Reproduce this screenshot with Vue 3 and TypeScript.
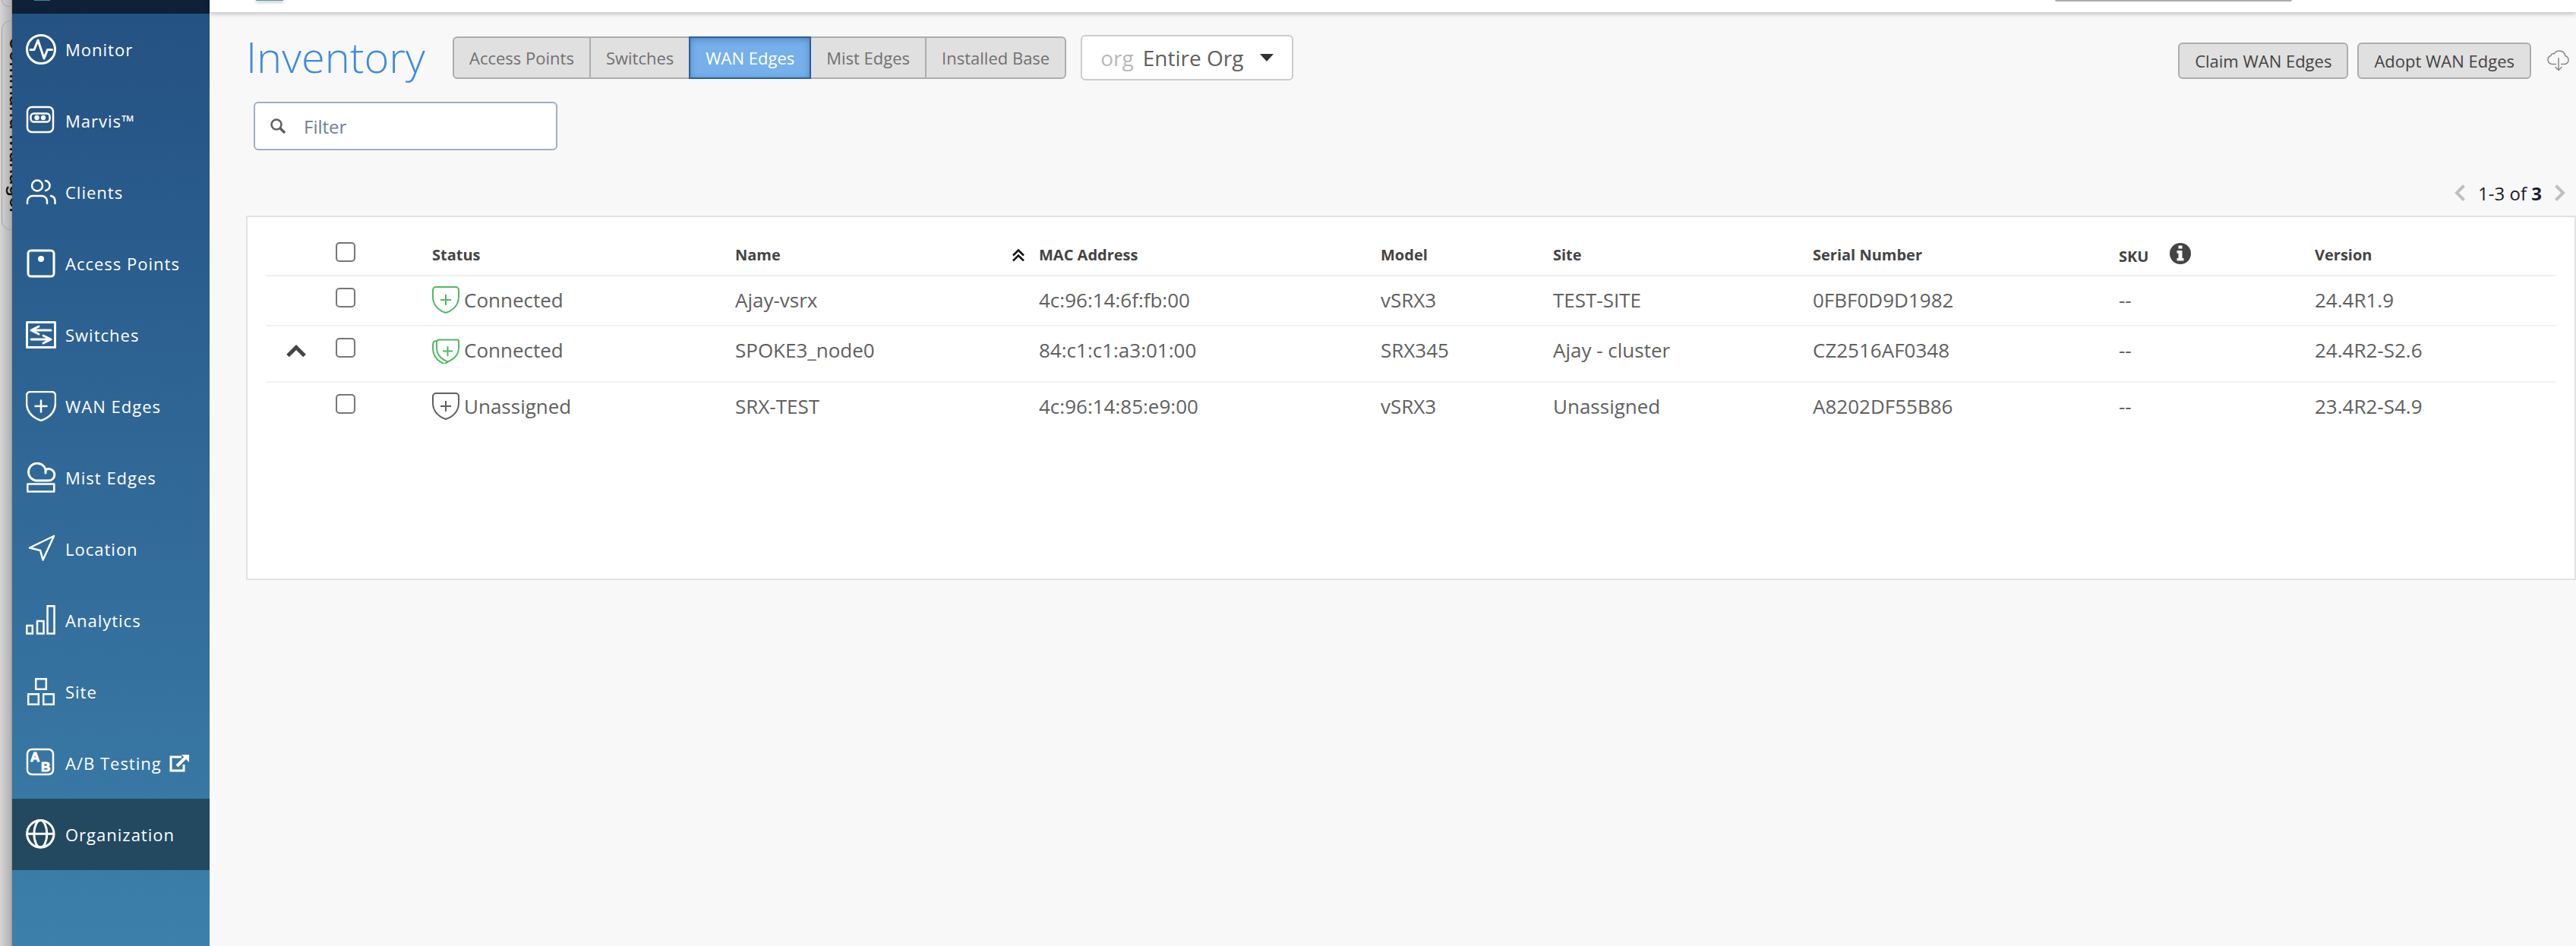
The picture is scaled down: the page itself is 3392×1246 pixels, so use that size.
<script setup lang="ts">
import { computed, ref } from 'vue'

interface NavItem {
  label: string
  icon: string
  external?: boolean
}

interface Device {
  status: 'Connected' | 'Unassigned'
  cluster: boolean
  name: string
  mac: string
  model: string
  site: string
  serial: string
  sku: string
  version: string
}

const navItems: NavItem[] = [
  {
    label: 'Monitor',
    icon: '<circle cx="20" cy="20" r="18.500" stroke-width="3"/><path stroke-width="3" d="M6 20.500h5L16 8l8 24 4.500-11.500h6"/>',
  },
  {
    label: 'Marvis™',
    icon: '<rect x="2" y="2" width="34" height="33" rx="6"/><rect x="6.500" y="10.500" width="25" height="11" rx="4"/><circle cx="14.500" cy="16" r="3.200" fill="#fff" stroke="none"/><circle cx="23" cy="16" r="3.200" fill="#fff" stroke="none"/>',
  },
  {
    label: 'Clients',
    icon: '<circle cx="15" cy="11.500" r="7"/><path d="M26 5c4 1 5.500 4 5.500 6.500S30 17 26 18M2 35v-3a7 7 0 0 1 7-7h12a7 7 0 0 1 7 7v3M33 25c4 1 5.500 4 5.500 7v3"/>',
  },
  {
    label: 'Access Points',
    icon: '<rect x="3" y="3" width="34" height="34" rx="4" stroke-width="3"/><circle cx="20" cy="14" r="4" fill="#fff" stroke="none"/>',
  },
  {
    label: 'Switches',
    icon: '<rect x="1.500" y="3.500" width="37" height="33" stroke-width="3"/><path stroke-width="3" d="M33 14H7M17 9L7 14l10 5M7 26h26M23 21l10 5-10 5"/>',
  },
  {
    label: 'WAN Edges',
    icon: '<path d="M6 1h28a5 5 0 0 1 5 5v9c0 12-8 20-19 24C9 35 1 27 1 15V6a5 5 0 0 1 5-5zM20 12.500v15M12.500 20h15"/>',
  },
  {
    label: 'Mist Edges',
    icon: '<path stroke-width="3" d="M26 14v-4.500A11.500 11.500 0 1 0 13 24h17a7.800 7.800 0 0 0 0-15.600c-2 0-4 1-4 3"/><rect x="2.300" y="28.500" width="35" height="10"/>',
  },
  {
    label: 'Location',
    icon: '<path d="M37 3L5 18.500l14 3.500 3.500 12.500z"/>',
  },
  {
    label: 'Analytics',
    icon: '<path stroke-linejoin="miter" d="M1.300 27h7.500v10.500H1.300zM15 21h8.500v16.500H15zM28.500 1.300h9v36.200h-9z"/>',
  },
  {
    label: 'Site',
    icon: '<path stroke-linejoin="miter" d="M13.200 3.200h13.600v13.600H13.200zM3.200 23.200h13.600v13.600H3.200zM23.200 23.200h13.600v13.600H23.200z"/>',
  },
  {
    label: 'A/B Testing',
    external: true,
    icon: '<rect x="2" y="2" width="34" height="33" rx="6"/><g fill="#fff" stroke="#fff" stroke-width="1" font-family="Liberation Sans, sans-serif" font-weight="700" font-size="17"><text x="6" y="18">A</text><text x="20" y="31">B</text></g>',
  },
  {
    label: 'Organization',
    icon: '<g stroke-width="3"><circle cx="19.300" cy="19.300" r="17.700"/><ellipse cx="19.300" cy="19.300" rx="8.500" ry="17.700"/><path d="M2 19.300h34"/></g>',
  },
]

const tabs = ['Access Points', 'Switches', 'WAN Edges', 'Mist Edges', 'Installed Base']

const devices: Device[] = [
  { status: 'Connected', cluster: false, name: 'Ajay-vsrx', mac: '4c:96:14:6f:fb:00', model: 'vSRX3', site: 'TEST-SITE', serial: '0FBF0D9D1982', sku: '--', version: '24.4R1.9' },
  { status: 'Connected', cluster: true, name: 'SPOKE3_node0', mac: '84:c1:c1:a3:01:00', model: 'SRX345', site: 'Ajay - cluster', serial: 'CZ2516AF0348', sku: '--', version: '24.4R2-S2.6' },
  { status: 'Unassigned', cluster: false, name: 'SRX-TEST', mac: '4c:96:14:85:e9:00', model: 'vSRX3', site: 'Unassigned', serial: 'A8202DF55B86', sku: '--', version: '23.4R2-S4.9' },
]

const activeNav = ref('Organization')
const activeTab = ref('WAN Edges')
const filter = ref('')
const selected = ref<string[]>([])

const visible = computed(() =>
  devices.filter((d) => Object.values(d).join(' ').toLowerCase().includes(filter.value.toLowerCase())),
)
const allSelected = computed({
  get: () => selected.value.length === devices.length,
  set: (on: boolean) => {
    selected.value = on ? devices.map((d) => d.serial) : []
  },
})
</script>

<template>
  <div class="app">
    <aside class="dock">
      <div class="dock-tab dock-tab-first"></div>
      <div class="dock-tab"><span>Command Manager</span></div>
    </aside>

    <nav class="sidebar">
      <div class="brand"><span class="brand-mark"></span></div>
      <a
        v-for="item in navItems"
        :key="item.label"
        href="#"
        class="nav-item"
        :class="{ active: item.label === activeNav }"
        @click.prevent="activeNav = item.label"
      >
        <svg class="nav-icon" viewBox="0 0 40 40" v-html="item.icon"></svg>
        <span>{{ item.label }}</span>
        <svg v-if="item.external" class="external" viewBox="0 0 26 24">
          <path d="M16 4H2v18h17v-8" fill="none" stroke="#fff" stroke-width="3" />
          <path d="M10 16L22 4" stroke="#fff" stroke-width="4" />
          <path d="M16 1h10v10z" fill="#fff" />
        </svg>
      </a>
    </nav>

    <main class="main">
      <div class="topbar">
        <span class="top-logo"></span>
        <span class="top-field"></span>
      </div>

      <section class="content">
        <header class="page-head">
          <h1>Inventory</h1>
          <div class="tabs">
            <button
              v-for="tab in tabs"
              :key="tab"
              type="button"
              :class="{ active: tab === activeTab }"
              @click="activeTab = tab"
            >{{ tab }}</button>
          </div>
          <div class="scope">
            <label for="scope">org</label>
            <select id="scope">
              <option>Entire Org</option>
            </select>
            <svg class="scope-arrow" viewBox="0 0 18 10"><path d="M0 0h18l-9 10z" fill="#333" /></svg>
          </div>
          <div class="actions">
            <button type="button" class="action">Claim WAN Edges</button>
            <button type="button" class="action">Adopt WAN Edges</button>
            <button type="button" class="download" aria-label="Download">
              <svg viewBox="0 0 30 28" fill="none" stroke="#888" stroke-width="1.500">
                <path d="M12 18.500H6.500A5.800 5.800 0 0 1 5 7.200C5.500 5 7.500 4 9.500 4.700 11 2 13.500 1 16 1c4.500 0 7.500 3 7.800 6.500a5.700 5.700 0 0 1 0 11H18" />
                <path d="M15 10v16M10.500 22l4.500 4.500 4.500-4.500" />
              </svg>
            </button>
          </div>
        </header>

        <label class="filter">
          <svg viewBox="0 0 20 20" fill="none" stroke="#606060">
            <circle cx="8" cy="8" r="6.500" stroke-width="2.500" />
            <path d="M12.500 12.500l6.500 6.500" stroke-width="3.500" />
          </svg>
          <input v-model="filter" type="text" placeholder="Filter" aria-label="Filter" />
        </label>

        <div class="pager">
          <button type="button" aria-label="Previous page">
            <svg viewBox="0 0 16 22"><path d="M13.500 1.500L4 11l9.500 9.500" fill="none" stroke="#bfbfbf" stroke-width="4" /></svg>
          </button>
          <span>1-3 of <b>3</b></span>
          <button type="button" aria-label="Next page">
            <svg viewBox="0 0 16 22"><path d="M2.500 1.500L12 11l-9.500 9.500" fill="none" stroke="#bfbfbf" stroke-width="4" /></svg>
          </button>
        </div>

        <div class="card">
          <table>
            <colgroup>
              <col class="c-expand" /><col class="c-check" /><col class="c-status" /><col class="c-name" />
              <col class="c-mac" /><col class="c-model" /><col class="c-site" /><col class="c-serial" />
              <col class="c-sku" /><col class="c-version" />
            </colgroup>
            <thead>
              <tr>
                <th></th>
                <th class="check"><input v-model="allSelected" type="checkbox" aria-label="Select all" /></th>
                <th>Status</th>
                <th>
                  <div class="sorted">
                    Name
                    <svg viewBox="0 0 16 16" fill="none" stroke="#111" stroke-width="2.500">
                      <path d="M1 8.500l7-7 7 7M1 15.500l7-7 7 7" />
                    </svg>
                  </div>
                </th>
                <th>MAC Address</th>
                <th>Model</th>
                <th>Site</th>
                <th>Serial Number</th>
                <th class="sku">
                  SKU
                  <svg viewBox="0 0 28 28">
                    <circle cx="14" cy="14" r="14" fill="#444" />
                    <path d="M11.500 3.500h5v4h-5zM9.500 10h7v10h2v3.500h-9V20h2v-6.500h-2z" fill="#fff" />
                  </svg>
                </th>
                <th>Version</th>
              </tr>
            </thead>
            <tbody>
              <tr v-for="d in visible" :key="d.serial" :class="{ cluster: d.cluster }">
                <td class="expand">
                  <button v-if="d.cluster" type="button" aria-label="Collapse cluster">
                    <svg viewBox="0 0 28 18"><path d="M3 15.500L14 4.500l11 11" fill="none" stroke="#444" stroke-width="5" /></svg>
                  </button>
                </td>
                <td class="check"><input v-model="selected" type="checkbox" :value="d.serial" :aria-label="'Select ' + d.name" /></td>
                <td>
                  <div class="status" :class="d.status.toLowerCase()">
                    <svg v-if="d.cluster" viewBox="0 0 36 36">
                      <path d="M9 4.500h24a2 2 0 0 1 2 2v8.500c0 9-6 15-14.500 18.500C12 30 6 24 6 15V7.500a3 3 0 0 1 3-3z" />
                      <path d="M6 6C3 6 1 7 1 11v4c0 11 5 17 14.500 21 2 0 3.500-1 5-2.500M20.500 13v13M14 19.500h13" />
                    </svg>
                    <svg v-else viewBox="0 0 36 36">
                      <path d="M5 1h26a4 4 0 0 1 4 4v9c0 10-7 18-17 21C8 32 1 24 1 14V5a4 4 0 0 1 4-4zM18 11v14M11 18h14" />
                    </svg>
                    <span>{{ d.status }}</span>
                  </div>
                </td>
                <td>{{ d.name }}</td>
                <td>{{ d.mac }}</td>
                <td>{{ d.model }}</td>
                <td>{{ d.site }}</td>
                <td>{{ d.serial }}</td>
                <td>{{ d.sku }}</td>
                <td>{{ d.version }}</td>
              </tr>
            </tbody>
          </table>
        </div>
      </section>
    </main>
  </div>
</template>

<style>
body {
  background: #f8f8f8;
}
</style>

<style scoped>
.app {
  display: flex;
  min-height: 100vh;
  font-family: 'Open Sans', 'Noto Sans', sans-serif;
  color: #606060;
}

.app * {
  box-sizing: border-box;
}

button {
  font: inherit;
  color: inherit;
  padding: 0;
  border: 0;
  background: none;
}

svg {
  display: block;
  flex: none;
}

/* Strip of the window behind, clipped by the sidebar */
.dock {
  width: 16px;
  flex: none;
  overflow: hidden;
  background: linear-gradient(90deg, #d6d6d6, #c6c6c6 40%, #b4b4b4 85%, #999);
}

.dock-tab {
  width: 60px;
  height: 276px;
  margin-left: 2px;
  padding: 20px 0 0 3px;
  border: 1px solid #a0a0a0;
  border-radius: 12px;
  color: #111;
  font: 500 25px/32px Inter, sans-serif;
}

.dock-tab span {
  display: block;
  writing-mode: vertical-rl;
  white-space: nowrap;
}

.dock-tab-first {
  height: 9px;
  margin-bottom: 18px;
  padding: 0;
  border-top: 0;
  border-radius: 0 0 12px 12px;
}

.sidebar {
  width: 260px;
  flex: none;
  background: linear-gradient(#245182, #295c8d 25%, #306897 50%, #3673a0 75%, #3c80ab);
}

.brand {
  height: 18px;
  padding-left: 29px;
  background: #0e2136;
}

.brand-mark {
  display: block;
  width: 21px;
  height: 1px;
  background: #2f8fa3;
}

.nav-item {
  display: flex;
  align-items: center;
  gap: 12px;
  height: 94px;
  padding-left: 18px;
  color: #fff;
  font-size: 22px;
  font-weight: 500;
  letter-spacing: 1px;
  text-decoration: none;
  white-space: nowrap;
}

.nav-item.active {
  background: #234961;
}

.nav-icon {
  width: 40px;
  height: 40px;
  fill: none;
  stroke: #fff;
  stroke-width: 2.500;
  stroke-linecap: round;
  stroke-linejoin: round;
}

.external {
  width: 26px;
  height: 24px;
  margin-left: -2px;
}

.main {
  flex: 1;
  min-width: 0;
}

.topbar {
  display: flex;
  justify-content: space-between;
  height: 16px;
  padding: 0 374px 0 61px;
  background: #fff;
  box-shadow: 0 2px 6px rgba(0, 0, 0, 0.25);
}

.top-logo {
  width: 36px;
  height: 1px;
  background: #5f9aa5;
  box-shadow: 0 1px 4px rgba(0, 0, 0, 0.8);
}

.top-field {
  width: 312px;
  height: 2px;
  border-radius: 0 0 4px 4px;
  background: #ababab;
}

.content {
  padding: 30px 0 0 48px;
}

.page-head {
  display: flex;
  align-items: center;
  height: 60px;
}

h1 {
  width: 272px;
  margin: 0;
  padding-bottom: 4px;
  color: #3d8be0;
  font-size: 56px;
  font-weight: 300;
  line-height: 56px;
}

.tabs {
  display: flex;
}

.tabs button {
  height: 56px;
  margin-left: -2px;
  padding: 0 20px;
  border: 2px solid #adadad;
  background: #e0e0e0;
  color: #707070;
  font-size: 22px;
  white-space: nowrap;
}

.tabs button:first-child {
  margin-left: 0;
  border-radius: 6px 0 0 6px;
}

.tabs button:last-child {
  border-radius: 0 6px 6px 0;
}

.tabs button.active {
  position: relative;
  border-color: #2b5f9c;
  background: #76b0ea;
  box-shadow: inset 0 2px 8px rgba(40, 90, 150, 0.5);
  color: #fff;
}

.scope {
  display: flex;
  align-items: center;
  width: 280px;
  height: 60px;
  margin-left: 19px;
  padding: 0 24px;
  border: 2px solid #ccc;
  border-radius: 6px;
  background: #fff;
  font-size: 28px;
}

.scope label {
  color: #b8b8b8;
}

.scope select {
  flex: 1;
  min-width: 0;
  margin-left: 12px;
  padding: 0;
  border: 0;
  appearance: none;
  background: none;
  color: #606060;
  font: inherit;
}

.scope-arrow {
  width: 18px;
  height: 10px;
}

.actions {
  display: flex;
  align-items: center;
  gap: 12px;
  margin-left: auto;
  padding: 8px 8px 0 0;
}

.action {
  height: 48px;
  padding: 0 20px;
  border: 2px solid #adadad;
  border-radius: 6px;
  background: #e0e0e0;
  color: #444;
  font-size: 22px;
  white-space: nowrap;
}

.download {
  margin-left: 9px;
}

.download svg {
  width: 30px;
  height: 28px;
}

.filter {
  display: flex;
  align-items: center;
  width: 400px;
  height: 64px;
  margin: 28px 0 0 10px;
  padding: 0 20px;
  border: 2px solid #a0aec0;
  border-radius: 6px;
  background: #fff;
}

.filter svg {
  width: 20px;
  height: 20px;
}

.filter input {
  flex: 1;
  min-width: 0;
  margin-left: 24px;
  padding: 0;
  border: 0;
  outline: 0;
  background: none;
  color: #444;
  font: inherit;
  font-size: 24px;
}

.filter input::placeholder {
  color: #718096;
}

.pager {
  display: flex;
  align-items: center;
  justify-content: flex-end;
  gap: 16px;
  height: 32px;
  margin: 40px 13px 14px 0;
  color: #1a202c;
  font-size: 24px;
}

.pager svg {
  width: 16px;
  height: 22px;
}

.card {
  min-height: 480px;
  padding: 0 24px;
  border: 2px solid #e2e2e2;
  background: #fff;
}

table {
  width: 100%;
  table-layout: fixed;
  border-spacing: 0;
}

.c-expand { width: 92px; }
.c-check { width: 127px; }
.c-status { width: 399px; }
.c-name { width: 400px; }
.c-mac { width: 450px; }
.c-model { width: 227px; }
.c-site { width: 342px; }
.c-serial { width: 403px; }
.c-sku { width: 258px; }
.c-version { width: 318px; }

th,
td {
  border-bottom: 2px solid #edf2f7;
  text-align: left;
  vertical-align: top;
  white-space: nowrap;
}

th {
  height: 78px;
  padding: 36px 0 0;
  color: #444;
  font-size: 20px;
  line-height: 28px;
}

td {
  height: 66px;
  padding: 13px 0 0;
  font-size: 26px;
  line-height: 36px;
}

.cluster td {
  height: 74px;
}

tbody tr:last-child td {
  border-bottom: 0;
}

th.check {
  padding-top: 33px;
}

td.check {
  padding-top: 15px;
}

.check input {
  display: block;
  width: 26px;
  height: 26px;
  margin: 0;
  appearance: none;
  border: 2px solid #767676;
  border-radius: 5px;
  background: #fff;
}

.check input:checked {
  background: #3d8be0;
}

.expand button {
  display: block;
  margin: 10px 0 0 26px;
}

.expand svg {
  width: 28px;
  height: 18px;
}

.sorted {
  display: flex;
  align-items: center;
  justify-content: space-between;
  padding-right: 19px;
}

.sorted svg {
  width: 16px;
  height: 16px;
}

th.sku {
  padding-top: 34px;
}

.sku svg {
  display: inline-block;
  width: 28px;
  height: 28px;
  margin-left: 22px;
  vertical-align: -3px;
}

.status {
  display: flex;
  align-items: center;
  gap: 6px;
}

.status svg {
  width: 36px;
  height: 36px;
  fill: none;
  stroke-width: 2;
}

.connected svg {
  stroke: #4fba63;
}

.unassigned svg {
  stroke: #606060;
}
</style>
